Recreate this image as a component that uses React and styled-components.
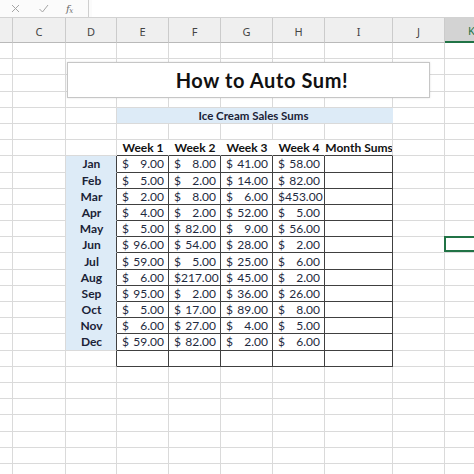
import React from "react";
import styled, { createGlobalStyle } from "styled-components";

const GRID = "#dadada";
const DARK = "#404040";
const BLUE = "#ddebf7";
const GREEN = "#217346";

const GlobalStyle = createGlobalStyle`
  html, body {
    margin: 0;
    padding: 0;
    background: #fff;
    overflow: hidden;
  }
  body {
    font-family: Lato, "Liberation Sans", sans-serif;
  }
`;

const COLS = ["B", "C", "D", "E", "F", "G", "H", "I", "J", "K"];
const WIDTHS = [13, 53, 51, 52, 52, 52, 52, 68, 52, 60];
const ROWS = 27;

const months = ["Jan", "Feb", "Mar", "Apr", "May", "Jun", "Jul", "Aug", "Sep", "Oct", "Nov", "Dec"];
const weeks = [
  ["9.00", "5.00", "2.00", "4.00", "5.00", "96.00", "59.00", "6.00", "95.00", "5.00", "6.00", "59.00"],
  ["8.00", "2.00", "8.00", "2.00", "82.00", "54.00", "5.00", "217.00", "2.00", "17.00", "27.00", "82.00"],
  ["41.00", "14.00", "6.00", "52.00", "9.00", "28.00", "25.00", "45.00", "36.00", "89.00", "4.00", "2.00"],
  ["58.00", "82.00", "453.00", "5.00", "56.00", "2.00", "6.00", "2.00", "26.00", "8.00", "5.00", "6.00"],
];

const Page = styled.div`
  width: 474px;
  height: 474px;
  overflow: hidden;
  background: #fff;
`;

const FormulaBar = styled.div`
  display: flex;
  height: 17px;
  border-bottom: 1px solid #d2d2d2;
  background: #fbfbfb;
`;

const IconBox = styled.div`
  width: 78px;
  display: flex;
  align-items: center;
  gap: 17px;
  padding-left: 10px;
  border-right: 1px solid #cfcfcf;
  color: #a5a5a5;
`;

const Fx = styled.span`
  font-family: "DejaVu Serif", "Liberation Serif", serif;
  font-style: italic;
  font-size: 10px;
  color: #6a6a6a;
  letter-spacing: -0.5px;
  sub {
    font-size: 7px;
    vertical-align: -1px;
  }
`;

const FormulaInput = styled.div`
  flex: 1;
  background: #fff;
  margin-left: 3px;
`;

const Sheet = styled.div`
  display: grid;
  grid-template-columns: ${WIDTHS.map((w) => w + "px").join(" ")};
  grid-template-rows: 25px repeat(${ROWS}, 16.19px);
`;

const ColHead = styled.div`
  grid-row: 1;
  display: flex;
  align-items: center;
  justify-content: ${(p) => (p.$active ? "flex-start" : "center")};
  padding: 2px 0 0 ${(p) => (p.$active ? "23px" : "0")};
  background: ${(p) => (p.$active ? "#d3d3d3" : "#efefef")};
  border-right: 1px solid #cbcbcb;
  border-bottom: ${(p) => (p.$active ? `2px solid ${GREEN}` : "1px solid #b9b9b9")};
  font-family: "Noto Sans", "Open Sans", sans-serif;
  font-size: 11px;
  color: ${(p) => (p.$active ? GREEN : "#444")};
`;

const Cell = styled.div`
  grid-row: ${(p) => p.$r};
  grid-column: ${(p) => p.$c};
  min-width: 0;
  display: flex;
  align-items: center;
  justify-content: ${(p) => p.$justify || "center"};
  padding: 0 4px 0 5px;
  background: ${(p) => p.$bg || "#fff"};
  border-right: 1px solid ${(p) => p.$right || GRID};
  border-bottom: 1px solid ${(p) => p.$bottom || GRID};
  box-shadow: ${(p) => (p.$sel ? `inset 0 0 0 2px ${GREEN}` : "none")};
  margin: ${(p) => (p.$sel ? "-1px 0 0 -1px" : "0")};
  font-size: 12px;
  font-weight: ${(p) => (p.$bold ? 700 : 400)};
  color: ${(p) => p.$color || "#1e2a40"};
  white-space: nowrap;
  overflow: hidden;
`;

const Band = styled.div`
  grid-row: 6;
  grid-column: 4 / 9;
  display: flex;
  align-items: center;
  justify-content: center;
  padding-right: 3px;
  background: ${BLUE};
  border-bottom: 1px solid ${GRID};
  font-size: 11.5px;
  font-weight: 700;
  color: #1a2236;
`;

const Title = styled.div`
  grid-row: 3 / 6;
  grid-column: 3 / 10;
  z-index: 1;
  margin: 3px 15px 10px 1px;
  display: flex;
  align-items: center;
  justify-content: center;
  padding-left: 27px;
  background: #fff;
  border: 1px solid #c6c6c6;
  box-shadow: 0 0 2px rgba(0, 0, 0, 0.12);
  font-size: 20px;
  letter-spacing: 0.6px;
  font-weight: 700;
  color: #111;
`;

const Cross = () => (
  <svg width="11" height="11" viewBox="0 0 11 11">
    <path d="M2 2 L9 9 M9 2 L2 9" stroke="currentColor" strokeWidth="1" fill="none" />
  </svg>
);

const Check = () => (
  <svg width="11" height="11" viewBox="0 0 11 11">
    <path d="M1.5 6 L4.5 9 L10 2" stroke="currentColor" strokeWidth="1" fill="none" />
  </svg>
);

function buildCells() {
  const cells = [];
  for (let r = 1; r <= ROWS; r++) {
    const g = r + 1;
    for (let c = 1; c <= COLS.length; c++) {
      if (r === 5 && c >= 4 && c <= 8) continue;
      const key = `${r}-${c}`;
      const inTable = r >= 8 && r <= 20 && c >= 4 && c <= 8;
      const m = r - 8;

      if (r === 7 && c >= 4 && c <= 8) {
        cells.push(
          <Cell key={key} $r={g} $c={c} $bold $color="#111" $bottom={DARK} $right={c === 8 ? GRID : "#fff"}>
            {c === 8 ? "Month Sums" : `Week ${c - 3}`}
          </Cell>
        );
        continue;
      }

      if (c === 3 && r >= 8 && r <= 19) {
        cells.push(
          <Cell key={key} $r={g} $c={c} $bg={BLUE} $bold $color="#1a2236" $right={DARK} $bottom={r === 19 ? GRID : BLUE}>
            {months[m]}
          </Cell>
        );
        continue;
      }

      if (inTable) {
        const val = r <= 19 && c <= 7 ? weeks[c - 4][m] : null;
        cells.push(
          <Cell key={key} $r={g} $c={c} $justify="space-between" $right={DARK} $bottom={DARK}>
            {val && (
              <>
                <span>$</span>
                <span>{val}</span>
              </>
            )}
          </Cell>
        );
        continue;
      }

      cells.push(
        <Cell
          key={key}
          $r={g}
          $c={c}
          $right={c === 3 && r === 20 ? DARK : undefined}
          $sel={r === 13 && c === 10}
        />
      );
    }
  }
  return cells;
}

export default function App() {
  return (
    <Page>
      <GlobalStyle />
      <FormulaBar>
        <IconBox>
          <Cross />
          <Check />
          <Fx>
            f<sub>x</sub>
          </Fx>
        </IconBox>
        <FormulaInput />
      </FormulaBar>
      <Sheet>
        {COLS.map((name, i) => (
          <ColHead key={name} $active={name === "K"}>
            {i === 0 ? "" : name}
          </ColHead>
        ))}
        <Title>How to Auto Sum!</Title>
        <Band>Ice Cream Sales Sums</Band>
        {buildCells()}
      </Sheet>
    </Page>
  );
}
